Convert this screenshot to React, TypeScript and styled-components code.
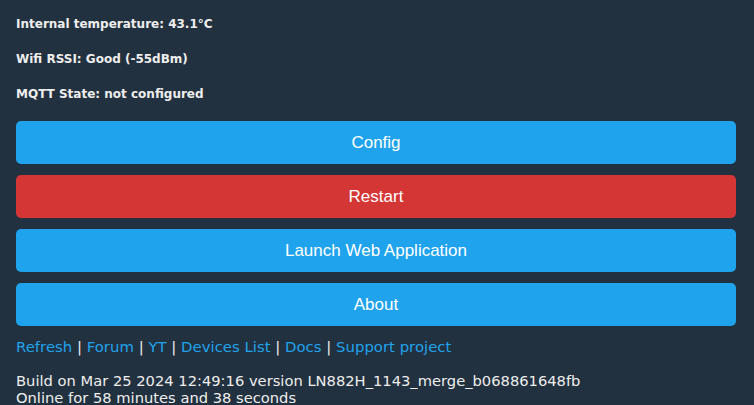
import styled, { createGlobalStyle } from "styled-components";

const GlobalStyle = createGlobalStyle`
  body {
    margin: 0;
    background: #22313f;
    color: #eaeaea;
    font-family: "DejaVu Sans", Verdana, sans-serif;
  }
`;

const links = ["Refresh", "Forum", "YT", "Devices List", "Docs", "Support project"];

export default function App() {
  return (
    <>
      <GlobalStyle />
      <Page>
        <StatusList>
          <StatusLine>Internal temperature: 43.1°C</StatusLine>
          <StatusLine>Wifi RSSI: Good (-55dBm)</StatusLine>
          <StatusLine>MQTT State: not configured</StatusLine>
        </StatusList>
        <ButtonList>
          <Button>Config</Button>
          <Button $danger>Restart</Button>
          <Button>Launch Web Application</Button>
          <Button>About</Button>
        </ButtonList>
        <LinkRow>
          {links.map((l, i) => (
            <span key={l}>
              {i > 0 && <Sep> | </Sep>}
              <LinkItem href="#">{l}</LinkItem>
            </span>
          ))}
        </LinkRow>
        <BuildInfo>
          Build on Mar 25 2024 12:49:16 version LN882H_1143_merge_b068861648fb
          <br />
          Online for 58 minutes and 38 seconds
        </BuildInfo>
      </Page>
    </>
  );
}

const Page = styled.div`
  padding: 16px 18px 0 16px;
`;

const StatusList = styled.div`
  display: flex;
  flex-direction: column;
  gap: 19px;
`;

const StatusLine = styled.div`
  font-size: 12px;
  font-weight: bold;
  line-height: 16px;
  color: #eeeeee;
`;

const ButtonList = styled.div`
  display: flex;
  flex-direction: column;
  gap: 11px;
  margin-top: 19px;
`;

const Button = styled.button<{ $danger?: boolean }>`
  height: 43px;
  width: 100%;
  border: 0;
  border-radius: 5px;
  background: ${(p) => (p.$danger ? "#d43535" : "#1fa3ec")};
  color: #ffffff;
  font-family: "Liberation Sans", Arial, sans-serif;
  font-size: 17px;
  cursor: pointer;
`;

const LinkRow = styled.div`
  margin-top: 11px;
  font-size: 14.9px;
  line-height: 20px;
  color: #eeeeee;
`;

const Sep = styled.span`
  color: #eeeeee;
`;

const LinkItem = styled.a`
  color: #1fa3ec;
  text-decoration: none;
`;

const BuildInfo = styled.div`
  margin-top: 16px;
  font-size: 14.7px;
  line-height: 16.5px;
  color: #eeeeee;
`;
